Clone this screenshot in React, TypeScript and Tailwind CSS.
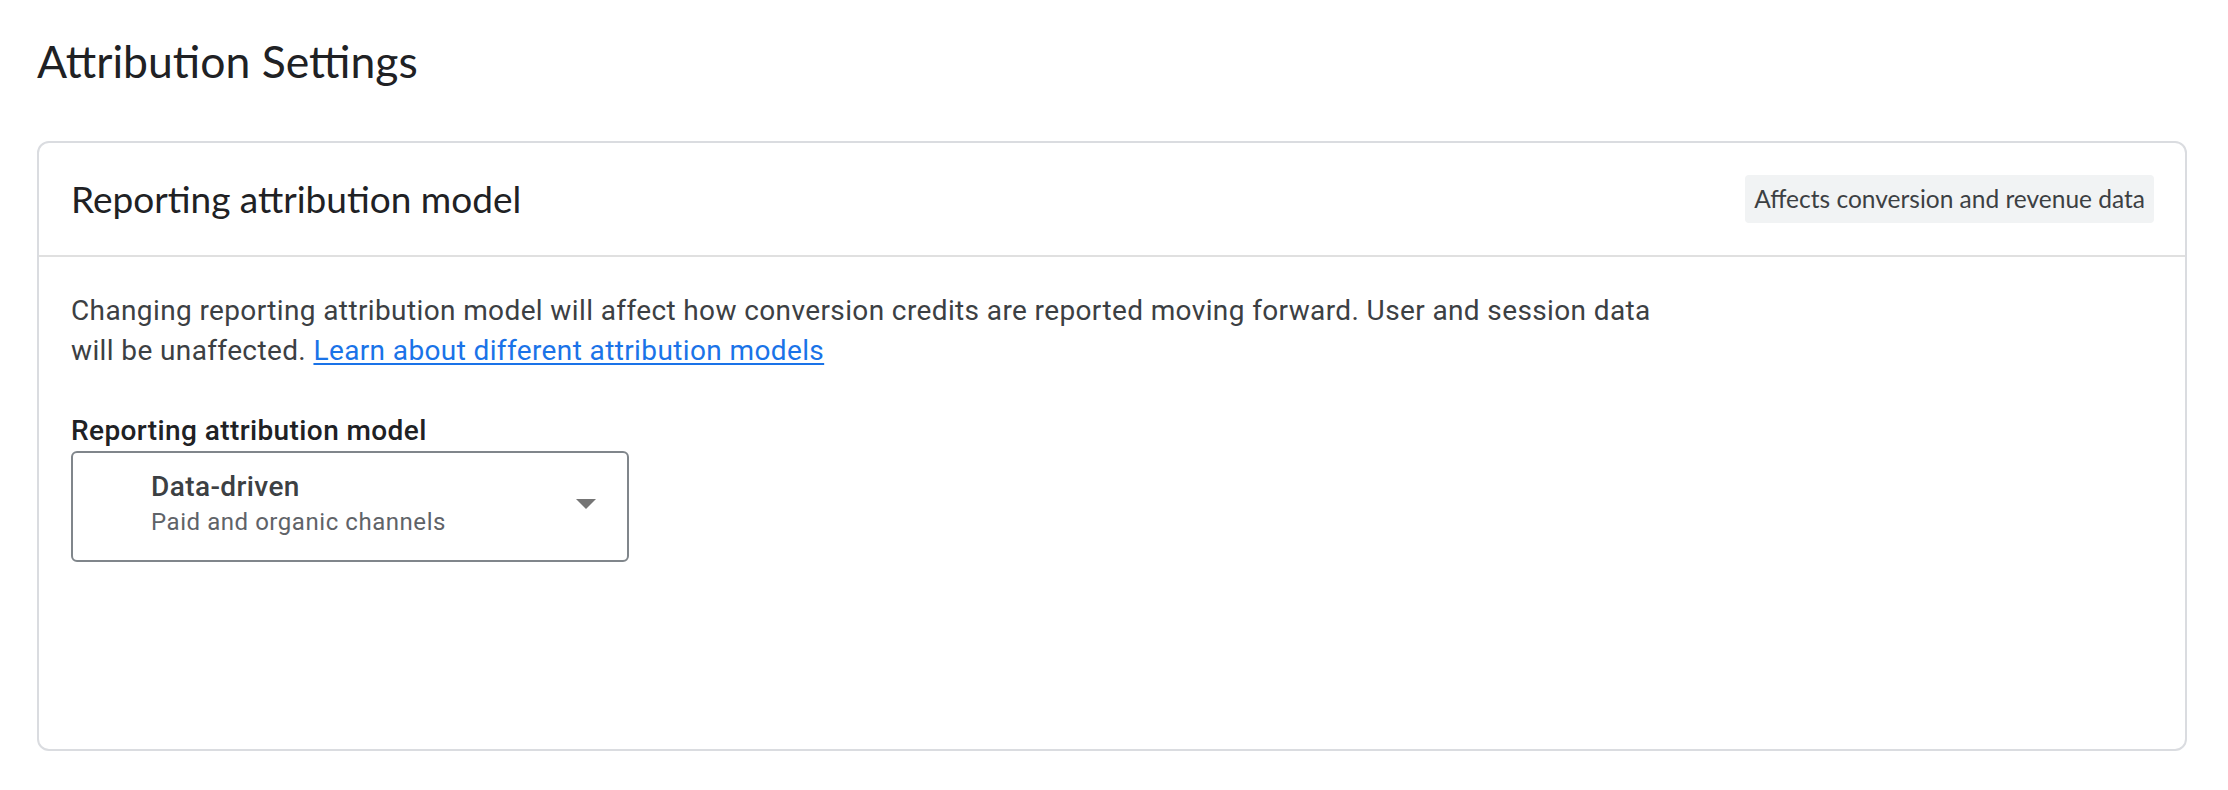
import { ReactNode } from "react";

// Section card with a header row and a body
function Card({ title, badge, children }: { title: string; badge: string; children: ReactNode }) {
  return (
    <section className="mt-[54px] h-[610px] flex flex-col rounded-[12px] border-2 border-[#dadce0] bg-white">
      <header className="h-[114px] shrink-0 flex items-center justify-between pl-[32px] pr-[31px] border-b-2 border-[#e0e0e0]">
        <h2 className="text-[37px] leading-[44px] text-[#202124] font-['Lato',sans-serif]">{title}</h2>
        <span className="h-[48px] flex items-center px-[9px] rounded-[4px] bg-[#f1f3f4] text-[24.5px] text-[#3c4043] font-['Lato',sans-serif]">
          {badge}
        </span>
      </header>
      <div className="flex-1 pl-[32px] pr-[34px] pt-[34px]">{children}</div>
    </section>
  );
}

function Caret() {
  return (
    <svg width="20" height="10" viewBox="0 0 20 10" className="shrink-0">
      <path d="M0 0h20L10 10z" fill="#757575" />
    </svg>
  );
}

export default function App() {
  return (
    <div className="min-h-screen bg-white pl-[37px] pr-[41px] pt-[35px] font-['Roboto',sans-serif]">
      <h1 className="text-[44.5px] leading-[52px] text-[#202124] font-['Lato',sans-serif]">Attribution Settings</h1>

      <Card title="Reporting attribution model" badge="Affects conversion and revenue data">
        <p className="max-w-[1615px] text-[28px] leading-[40px] tracking-[0.38px] text-[#3c4043]">
          Changing reporting attribution model will affect how conversion credits are reported moving forward. User and session data will be unaffected.{" "}
          <a href="#" className="text-[#1a73e8] underline underline-offset-[3px]">
            Learn about different attribution models
          </a>
        </p>

        <label className="block mt-[42px] text-[28px] leading-[36px] tracking-[0.4px] font-medium text-[#202124]">
          Reporting attribution model
        </label>
        <button className="mt-[2px] w-[558px] h-[111px] flex items-center justify-between pl-[78px] pr-[31px] pb-[6px] rounded-[6px] border-2 border-[#80868b] text-left">
          <div className="flex flex-col">
            <span className="text-[28px] leading-[36px] tracking-[0.4px] font-medium text-[#3c4043]">Data-driven</span>
            <span className="text-[24px] leading-[34px] tracking-[0.55px] text-[#5f6368]">Paid and organic channels</span>
          </div>
          <Caret />
        </button>
      </Card>
    </div>
  );
}
